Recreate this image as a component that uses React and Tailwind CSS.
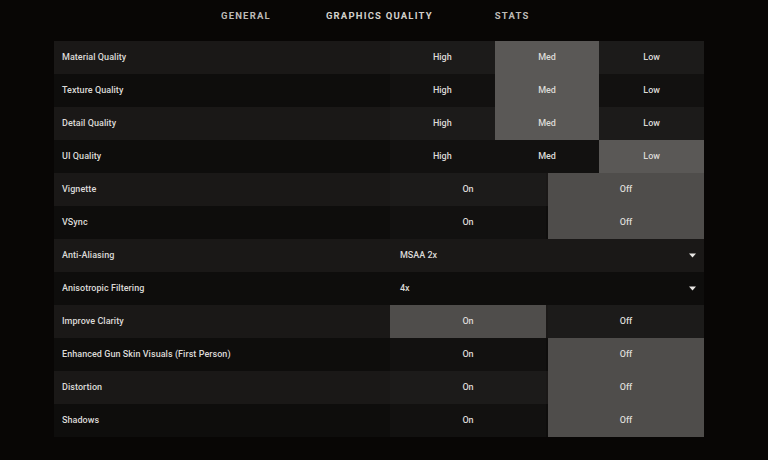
import React from 'react'

const ROWS = [
  { label: 'Material Quality', options: ['High', 'Med', 'Low'], selected: 1 },
  { label: 'Texture Quality', options: ['High', 'Med', 'Low'], selected: 1 },
  { label: 'Detail Quality', options: ['High', 'Med', 'Low'], selected: 1 },
  { label: 'UI Quality', options: ['High', 'Med', 'Low'], selected: 2 },
  { label: 'Vignette', options: ['On', 'Off'], selected: 1 },
  { label: 'VSync', options: ['On', 'Off'], selected: 1 },
  { label: 'Anti-Aliasing', dropdown: 'MSAA 2x' },
  { label: 'Anisotropic Filtering', dropdown: '4x' },
  { label: 'Improve Clarity', options: ['On', 'Off'], selected: 0 },
  { label: 'Enhanced Gun Skin Visuals (First Person)', options: ['On', 'Off'], selected: 1 },
  { label: 'Distortion', options: ['On', 'Off'], selected: 1 },
  { label: 'Shadows', options: ['On', 'Off'], selected: 1 },
]

function Caret() {
  return (
    <svg width="7" height="5" viewBox="0 0 7 5" className="mr-[8px]">
      <path d="M0 0.5 L7 0.5 L3.5 4.5 Z" fill="#e8e6e4" />
    </svg>
  )
}

function Row({ row, odd }) {
  const rowBg = odd ? 'bg-[#1a1817]' : 'bg-[#0e0d0c]'
  return (
    <div className={`flex h-[33px] ${rowBg}`}>
      <div className="w-[336px] flex items-center pl-[8px] text-[9px] font-medium text-[#dcdad7] tracking-[0.05px]">
        {row.label}
      </div>
      {row.dropdown ? (
        <div className="w-[314px] flex items-center justify-between pl-[10px]">
          <span className="text-[9px] font-medium text-[#dcdad7]">{row.dropdown}</span>
          <Caret />
        </div>
      ) : (
        <div className={`w-[314px] flex ${row.options.length === 2 ? 'gap-[2px]' : ''}`}>
          {row.options.map((opt, i) => (
            <div
              key={opt}
              className={`flex-1 flex items-center justify-center text-[9px] font-medium text-[#dcdad7] ${
                i === row.selected
                  ? row.options.length === 3 ? 'bg-[#5a5856]' : 'bg-[#4f4d4b]'
                  : odd ? 'bg-[#1c1b1a]' : 'bg-[#121110]'
              }`}
            >
              {opt}
            </div>
          ))}
        </div>
      )}
    </div>
  )
}

export default function App() {
  return (
    <div
      className="w-[768px] h-[460px] bg-[#080605] overflow-hidden"
      style={{ fontFamily: 'Roboto, "Liberation Sans", sans-serif' }}
    >
      <div className="h-[41px] flex items-start pt-[9px] text-[9.5px] font-bold tracking-[1.2px] text-[#bdbab6]">
        <span className="ml-[221px]">GENERAL</span>
        <span className="ml-[55px] text-[#d4d1cc]">GRAPHICS QUALITY</span>
        <span className="ml-[62px]">STATS</span>
      </div>
      <div className="ml-[54px] w-[650px] flex flex-col">
        {ROWS.map((row, i) => (
          <Row key={row.label} row={row} odd={i % 2 === 0} />
        ))}
      </div>
    </div>
  )
}
